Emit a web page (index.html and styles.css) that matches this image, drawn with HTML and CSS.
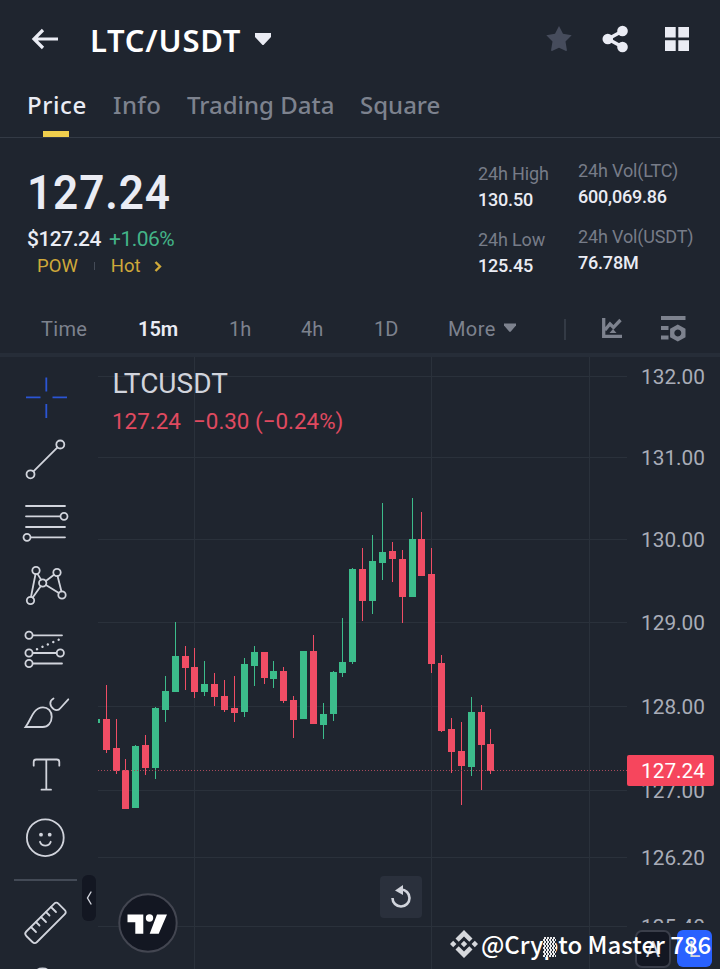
FILE: index.html
```html
<!DOCTYPE html>
<html lang="en">
<head>
    <meta charset="UTF-8">
    <title>LTC/USDT</title>
    <link rel="stylesheet" href="styles.css">
</head>
<body>
<header class="header">
    <svg class="back" width="28" height="22" viewBox="0 0 28 22">
        <path d="M27 11H3M12 2L3 11l9 9"/>
    </svg>
    <h1>LTC/USDT</h1>
    <svg class="arrow" width="18" height="14" viewBox="0 0 18 14">
        <path d="M1 1h16v4L10 12.500q-1 1-2 0L1 5z"/>
    </svg>
    <div class="actions">
        <svg width="28" height="28" viewBox="0 0 28 28">
            <path class="star" d="M14 1l4 7.700 8.700 1.500-6.200 6.300 1.400 8.500q0 1.500-1.400.8L14 22.800l-6.500 3q-1.400.7-1.400-.8l1.400-8.500L1.300 10.200 10 8.700z"/>
        </svg>
        <svg width="28" height="28" viewBox="0 0 28 28">
            <path class="share-line" d="M21.500 6L7 14l14.500 8"/>
            <circle cx="21.500" cy="6" r="5.300"/>
            <circle cx="6.800" cy="14" r="5.300"/>
            <circle cx="21.500" cy="22" r="5.300"/>
        </svg>
        <svg width="26" height="26" viewBox="0 0 26 26">
            <path d="M1 1h10.700v10.500H1zM14.300 1H25v10.500H14.300zM1 14.300h10.700V25H1zM14.300 14.300H25V25H14.300z"/>
        </svg>
    </div>
</header>

<nav class="tabs">
    <a class="tab active">Price</a>
    <a class="tab info">Info</a>
    <a class="tab trading">Trading Data</a>
    <a class="tab square">Square</a>
</nav>

<section class="summary">
    <div class="price">
        <div class="last"><span>127.24</span></div>
        <div class="change"><span class="usd">$127.24</span><span class="up">+1.06%</span></div>
        <div class="tags">
            <span class="pow">POW</span>
            <i></i>
            <span class="hot">Hot</span>
            <svg width="8" height="11" viewBox="0 0 8 11"><path d="M1.500 1l4.500 4.500L1.500 10"/></svg>
        </div>
    </div>
    <dl class="stats range">
        <dt>24h High</dt>
        <dd>130.50</dd>
        <dt>24h Low</dt>
        <dd>125.45</dd>
    </dl>
    <dl class="stats volume">
        <dt>24h Vol(LTC)</dt>
        <dd>600,069.86</dd>
        <dt>24h Vol(USDT)</dt>
        <dd>76.78M</dd>
    </dl>
</section>

<div class="intervals">
    <span class="time">Time</span>
    <span class="m15">15m</span>
    <span class="h1">1h</span>
    <span class="h4">4h</span>
    <span class="d1">1D</span>
    <span class="more">More</span>
    <svg class="more-arrow" width="12" height="10" viewBox="0 0 12 10"><path d="M0 .5h12v2L6.800 8.500q-.8.8-1.600 0L0 2.500z"/></svg>
    <i></i>
    <svg class="chart-icon" width="20" height="20" viewBox="0 0 20 20">
        <path class="line" d="M1.700 0v18.300H20M3 12l5-6 3.500 3.500L18.500 2"/>
        <path d="M7.500 15l3.500-4 3.500 4z"/>
    </svg>
    <svg class="settings-icon" width="25" height="26" viewBox="0 0 25 26">
        <path d="M0 0h24.500v4H0zM0 10h7.500v4H0zM0 19.500h7.500v4H0z"/>
        <path fill-rule="evenodd" d="M16.800 8.500l7.700 4.300v8.400l-7.700 4.300-7.700-4.300v-8.400zM16.800 13.500a3.500 3.500 0 1 0 .01 0z"/>
    </svg>
</div>

<main class="chart">
    <aside class="toolbar">
        <svg class="cross" viewBox="0 0 50 63"><path d="M25.300 11.500v14M25.300 38v14M5 31.300h14.500M31.500 31.300H46"/></svg>
        <svg viewBox="0 0 50 63">
            <circle cx="9.500" cy="45.300" r="4"/><circle cx="39.300" cy="15.500" r="4"/>
            <path d="M12.500 42.300l24-24"/>
        </svg>
        <svg viewBox="0 0 50 63">
            <path d="M5 14h39M5 24.300h34M5 35h39M10 45.300h34"/>
            <circle cx="43" cy="24.300" r="3.500"/><circle cx="6" cy="45.300" r="3.500"/>
        </svg>
        <svg viewBox="0 0 50 63">
            <circle cx="15" cy="15.500" r="3.700"/><circle cx="36" cy="17.500" r="3.700"/><circle cx="21.700" cy="28" r="3.700"/>
            <circle cx="9.500" cy="45.500" r="3.700"/><circle cx="41" cy="40" r="3.700"/>
            <path d="M14.500 19.200L10 41.800M16.500 18.900l3.500 5.700M24.800 26l8.200-6.300M36.600 21.200l3.800 15.100M24.900 30l13 7.900M19.700 31.200l-8 11.300"/>
        </svg>
        <svg viewBox="0 0 50 63">
            <circle cx="8" cy="17.300" r="3.600"/><circle cx="8" cy="35" r="3.600"/><circle cx="39.300" cy="35" r="3.600"/><circle cx="8" cy="45.500" r="3.600"/>
            <path d="M12 17.300h29M12 35h23.500M12 45.500h29"/>
            <path class="dots" d="M16 31.200l24-10.500"/>
        </svg>
        <svg viewBox="0 0 50 63">
            <path d="M4.500 46C9 40 10 35 13.500 30.700 16 27.500 19 26.300 22 26.300c5 0 8.700 4 8.700 9.400 0 6-3.700 10.300-9 10.300z"/>
            <path d="M32.500 17.500c-4.500 2.500-4 7.500 0 10.500 3 2 5.500 1 7-1l7.800-8.700"/>
        </svg>
        <svg viewBox="0 0 50 63"><path d="M12.700 21.700v-3.700q0-2.500 2.500-2.500h20.600q2.500 0 2.500 2.500v3.700M25.300 15.500v30.200M20.500 45.700H30"/></svg>
        <svg viewBox="0 0 50 63">
            <circle cx="24.300" cy="30.700" r="18.400"/>
            <path d="M19 34.800c2 5 8.700 5 10.700 0"/>
            <circle class="eye" cx="20" cy="27.700" r="1.900"/><circle class="eye" cx="28.700" cy="27.700" r="1.900"/>
        </svg>
        <hr>
        <svg class="ruler" viewBox="0 0 50 88">
            <path d="M5.300 50.500L33 22.800q2.300-2.300 4.600 0l6 6q2.300 2.300 0 4.600L16 61q-2.300 2.300-4.600 0l-6.100-6q-2.200-2.300 0-4.500z"/>
            <path d="M10 46l5 5M15 41l3.500 3.500M20 36l5 5M25 31l3.500 3.500M30 26l5 5"/>
            <path d="M15 90.500c2-4 11-4 13 0"/>
        </svg>
        <button class="collapse">
            <svg width="6" height="14" viewBox="0 0 6 14"><path d="M5 1L1.500 7 5 13"/></svg>
        </button>
    </aside>

    <svg class="plot" width="622" height="614" viewBox="98 355 622 614">
        <g id="grid"></g>
        <g id="candles"></g>
        <path class="last-line" d="M98 770.500H627"/>
        <g id="labels"></g>
        <rect class="last-box" x="627" y="755" width="87" height="31" rx="2"/>
        <text class="last-text" x="641" y="778">127.24</text>
        <text class="symbol" x="112.500" y="393">LTCUSDT</text>
        <text class="diff" x="112" y="429">127.24</text>
        <text class="diff" x="193" y="429">−0.30 (−0.24%)</text>

        <rect class="reset" x="380" y="876" width="42" height="42" rx="4"/>
        <path class="reset-arrow" d="M392.500 898a8.500 8.500 0 1 0 8.500-8.500h-2"/>
        <path class="reset-head" d="M395 890.500l8-5.500v10z"/>

        <circle class="logo" cx="148" cy="923" r="28.700"/>
        <path class="logo-mark" d="M127.500 914.500h15.800v19.200h-8v-11.500h-7.800zM157 914.500h10l-8.300 19.200h-9z"/>
        <circle class="logo-mark" cx="149.500" cy="918" r="3.700"/>

        <path class="corner" d="M627 923h93v46h-93z"/>
        <rect class="btn-a" x="636" y="931" width="34" height="36" rx="6"/>
        <text class="btn-text" x="653" y="957">A</text>
        <rect class="btn-l" x="677" y="930" width="35" height="37" rx="6"/>
        <text class="btn-text" x="694.500" y="957">L</text>
    </svg>

    <div class="watermark">
        <svg width="28" height="28" viewBox="0 0 28 28">
            <path d="M14 0l8.500 8.500-3.200 3.200L14 6.400l-5.300 5.300-3.200-3.200zM14 28l8.500-8.500-3.200-3.200L14 21.600l-5.300-5.300-3.200 3.200zM0 14l3.200-3.200L6.400 14l-3.200 3.200zM21.600 14l3.200-3.200L28 14l-3.200 3.200zM10.800 14l3.200-3.200 3.200 3.200-3.200 3.200z"/>
        </svg>
        <span>@Cry<b class="glitch">p</b>to Master 786</span>
    </div>
</main>

<script>
    const gridX = [194.5, 431.500, 589.5];
    // y position and label of each price line
    const prices = [
        [376.5, "132.00"], [457.5, "131.00"], [539.5, "130.00"], [622.5, "129.00"],
        [706.5, "128.00"], [790.5, "127.00"], [857.5, "126.20"], [926.5, "125.40"]
    ];
    // x, high, body top, body bottom, low, up
    const candles = [
        [106.5, 685, 719, 750, 753, 0], [116.5, 719, 748, 771, 774, 0], [125.5, 759, 770, 809, 809, 0],
        [135.5, 745, 746, 808, 808, 1], [145.5, 735, 745, 768, 775, 0], [155.5, 707, 708, 768, 779, 1],
        [165.5, 676, 691, 710, 722, 1], [175.5, 622, 656, 692, 692, 1], [185.5, 646, 656, 668, 690, 0],
        [194.5, 648, 667, 692, 698, 0], [204.5, 661, 684, 692, 696, 1], [214.5, 673, 684, 697, 706, 0],
        [224.5, 680, 696, 710, 712, 0], [234.5, 676, 708, 713, 722, 0], [244.5, 658, 664, 712, 717, 1],
        [254.5, 646, 652, 666, 686, 1], [264.5, 652, 652, 678, 684, 0], [273.5, 661, 671, 679, 688, 1],
        [283.5, 667, 671, 701, 703, 0], [293.5, 696, 700, 720, 738, 0], [303.5, 651, 651, 719, 719, 1],
        [313.5, 635, 651, 724, 724, 0], [323.5, 703, 714, 725, 739, 1], [333.5, 671, 672, 714, 721, 1],
        [342.5, 618, 662, 673, 677, 1], [352.5, 568, 569, 662, 664, 1], [362.5, 548, 569, 601, 621, 0],
        [372.5, 535, 561, 601, 614, 1], [382.5, 503, 552, 563, 580, 1], [392.5, 542, 551, 559, 582, 0],
        [402.5, 550, 559, 597, 623, 0], [412.5, 498, 539, 597, 597, 1], [421.5, 512, 539, 576, 576, 0],
        [431.5, 548, 574, 664, 673, 0], [441.5, 655, 663, 731, 732, 0], [451.5, 718, 729, 752, 773, 0],
        [461.5, 722, 751, 766, 805, 0], [471.5, 697, 712, 767, 776, 1], [481.5, 705, 712, 745, 790, 0],
        [490.5, 729, 744, 771, 774, 0]
    ];

    let lines = "<path d='M0 0";
    gridX.forEach(x => lines += `M${x} 357V969`);
    prices.forEach(p => lines += `M98 ${p[0]}H627`);
    document.getElementById("grid").innerHTML = lines + "'/>";

    document.getElementById("labels").innerHTML = prices
        .map(p => `<text x="641" y="${p[0] + 7.5}">${p[1]}</text>`).join("");

    // first candle is cut off by the left edge
    let bars = "<rect class='up' x='98' y='719' width='2' height='4'/>";
    candles.forEach(([x, high, top, bottom, low, up]) => {
        bars += `<g class="${up ? "up" : "down"}">
            <rect x="${x - 0.5}" y="${high}" width="1" height="${low - high}"/>
            <rect x="${x - 3.5}" y="${top}" width="7" height="${bottom - top}"/>
        </g>`;
    });
    document.getElementById("candles").innerHTML = bars;
</script>
</body>
</html>
```
FILE: styles.css
```css
* {
    box-sizing: border-box;
}

body {
    margin: 0;
    width: 720px;
    height: 969px;
    overflow: hidden;
    background-color: #1f252f;
    color: #eaecf4;
    font-family: Roboto, sans-serif;
}

svg {
    display: block;
    flex: none;
    fill: #eaecf4;
}

.header {
    display: flex;
    align-items: center;
    height: 78px;
    padding-left: 31px;
    padding-right: 30px;
}

.back {
    fill: none;
    stroke: #eaecf4;
    stroke-width: 3.2;
}

h1 {
    margin: 1px 0 0 31px;
    width: 164px;
    font-family: "Noto Sans", sans-serif;
    font-size: 31px;
    font-weight: 600;
    letter-spacing: 0.75px;
    color: white;
    white-space: nowrap;
}

.actions {
    display: flex;
    align-items: center;
    margin-left: auto;
}

.actions svg {
    margin-left: 28px;
}

.actions svg:last-child {
    margin-left: 35px;
}

.star {
    fill: #464c5c;
}

.share-line {
    fill: none;
    stroke: #eaecf4;
    stroke-width: 3.5;
}

.tabs {
    display: flex;
    height: 60px;
    padding-left: 27px;
    border-bottom: 1px solid #333a45;
    font-family: "Noto Sans", sans-serif;
    font-size: 24px;
    font-weight: 500;
    line-height: 54px;
    color: #7d828e;
    white-space: nowrap;
}

.tab {
    position: relative;
}

.active {
    width: 86px;
    letter-spacing: 0.6px;
    color: #eaecf4;
}

.info {
    width: 74px;
    letter-spacing: 0.4px;
}

.trading {
    width: 173px;
}

.active::after {
    content: "";
    position: absolute;
    left: 16px;
    top: 53px;
    width: 26px;
    height: 6px;
    background-color: #f0cf4d;
}

.summary {
    display: flex;
    height: 165px;
    padding-left: 27px;
}

.price {
    width: 451px;
    padding-top: 25px;
}

.last {
    height: 61px;
    font-size: 49px;
    font-weight: 600;
    line-height: 59px;
}

.last span {
    display: inline-block;
    letter-spacing: 1px;
    transform: scaleX(0.9);
    transform-origin: left;
}

.change {
    display: flex;
    font-size: 21px;
    font-weight: 500;
    line-height: 30px;
    letter-spacing: -0.5px;
}

.usd {
    width: 82px;
}

.change .up {
    font-weight: 400;
}

.up {
    color: #43b488;
    fill: #3cbc8b;
}

.down {
    fill: #f04d65;
}

.tags {
    display: flex;
    align-items: center;
    padding-left: 10px;
    font-size: 18.5px;
    line-height: 24px;
    color: #cfa93a;
}

.tags i {
    width: 1px;
    height: 8px;
    margin: 0 16px;
    background-color: #444b57;
}

.tags svg {
    margin-left: 13px;
    fill: none;
    stroke: #cfa93a;
    stroke-width: 2.4;
}

.stats {
    margin: 0;
    font-size: 18px;
    white-space: nowrap;
}

.range {
    width: 100px;
    padding-top: 22px;
}

.volume {
    padding-top: 19px;
}

.stats dt {
    color: #777c88;
    line-height: 28px;
    letter-spacing: -0.15px;
}

.stats dd {
    margin: 0 0 14px;
    line-height: 24px;
    font-weight: 500;
    letter-spacing: -0.2px;
}

.intervals {
    display: flex;
    align-items: center;
    height: 50px;
    padding-top: 2px;
    padding-left: 41px;
    font-size: 20px;
    color: #7d828e;
}

.intervals svg {
    margin-top: -2px;
    fill: #7d828e;
}

.time {
    width: 97px;
    letter-spacing: 0.3px;
}

.m15 {
    width: 91px;
    font-weight: 600;
    color: #eaecf4;
}

.h1 {
    width: 72px;
}

.h4 {
    width: 73px;
}

.d1 {
    width: 74px;
}

.more {
    width: 56px;
    letter-spacing: 0.4px;
}

.intervals i {
    width: 2px;
    height: 21px;
    margin: 0 36px 0 48px;
    background-color: #333a45;
}

.intervals .line {
    fill: none;
    stroke: #7d828e;
    stroke-width: 3.3;
}

.intervals .settings-icon {
    margin-left: 39px;
    margin-top: 0;
}

.chart {
    position: relative;
    display: flex;
    height: 616px;
    border-top: 4px solid #262d38;
}

.toolbar {
    position: relative;
    width: 98px;
    padding-top: 9px;
}

.toolbar svg {
    width: 50px;
    height: 63px;
    margin-left: 21px;
    fill: none;
    stroke: #d1d4dc;
    stroke-width: 1.8;
    stroke-linecap: round;
}

.toolbar .cross {
    stroke: #2b55d4;
    stroke-linecap: butt;
}

.toolbar .dots {
    stroke-dasharray: 0.1 5.8;
    stroke-width: 2.4;
}

.toolbar .eye {
    fill: #d1d4dc;
    stroke: none;
}

.toolbar hr {
    width: 63px;
    height: 2px;
    margin: 9px 0 0 14px;
    border: 0;
    background-color: #434a56;
}

.toolbar .ruler {
    height: 88px;
}

.collapse {
    position: absolute;
    left: 82px;
    top: 518px;
    width: 14px;
    height: 46px;
    padding: 0;
    border: 0;
    border-radius: 6px;
    background-color: #131722;
}

.toolbar .collapse svg {
    width: 6px;
    height: 14px;
    margin: 0 auto;
    stroke-width: 1.4;
}

.plot {
    margin-top: -2px;
    font-size: 20.8px;
}

.plot text {
    fill: #a9adb8;
}

#grid path {
    fill: none;
    stroke: #2a313b;
}

.last-line {
    stroke: #a84a5b;
    stroke-dasharray: 1 2;
}

.last-box {
    fill: #f6465d;
}

.plot .last-text {
    fill: white;
}

.plot .symbol {
    font-size: 28px;
    fill: #d1d4dc;
}

.plot .diff {
    font-size: 22.4px;
    fill: #e04a60;
}

.reset {
    fill: #2a303c;
}

.reset-arrow {
    fill: none;
    stroke: #d1d4dc;
    stroke-width: 2.6;
}

.reset-head {
    fill: #d1d4dc;
}

.logo {
    fill: #131722;
    stroke: #434651;
    stroke-width: 2;
}

.logo-mark {
    fill: white;
}

.corner {
    fill: #1f252f;
}

.btn-a {
    fill: #131722;
    stroke: #3a3e4a;
    stroke-width: 2;
}

.btn-l {
    fill: #2962ff;
}

.plot .btn-text {
    font-size: 22px;
    text-anchor: middle;
    fill: #d1d4dc;
}

.watermark {
    position: absolute;
    left: 450px;
    top: 569px;
    display: flex;
    align-items: center;
    font-family: "Noto Sans CJK SC", sans-serif;
    font-size: 24px;
    font-weight: 500;
    line-height: 36px;
    color: white;
    white-space: nowrap;
}

.watermark svg {
    margin-right: 3px;
    fill: #d6d8dc;
}

.glitch {
    position: relative;
    font-weight: 500;
}

.glitch::after {
    content: "";
    position: absolute;
    left: 0;
    top: 11px;
    width: 13px;
    height: 20px;
    background: repeating-conic-gradient(#e8e8ea 0 25%, #1f2630 0 50%) 0 0 / 3px 4px;
}
```
